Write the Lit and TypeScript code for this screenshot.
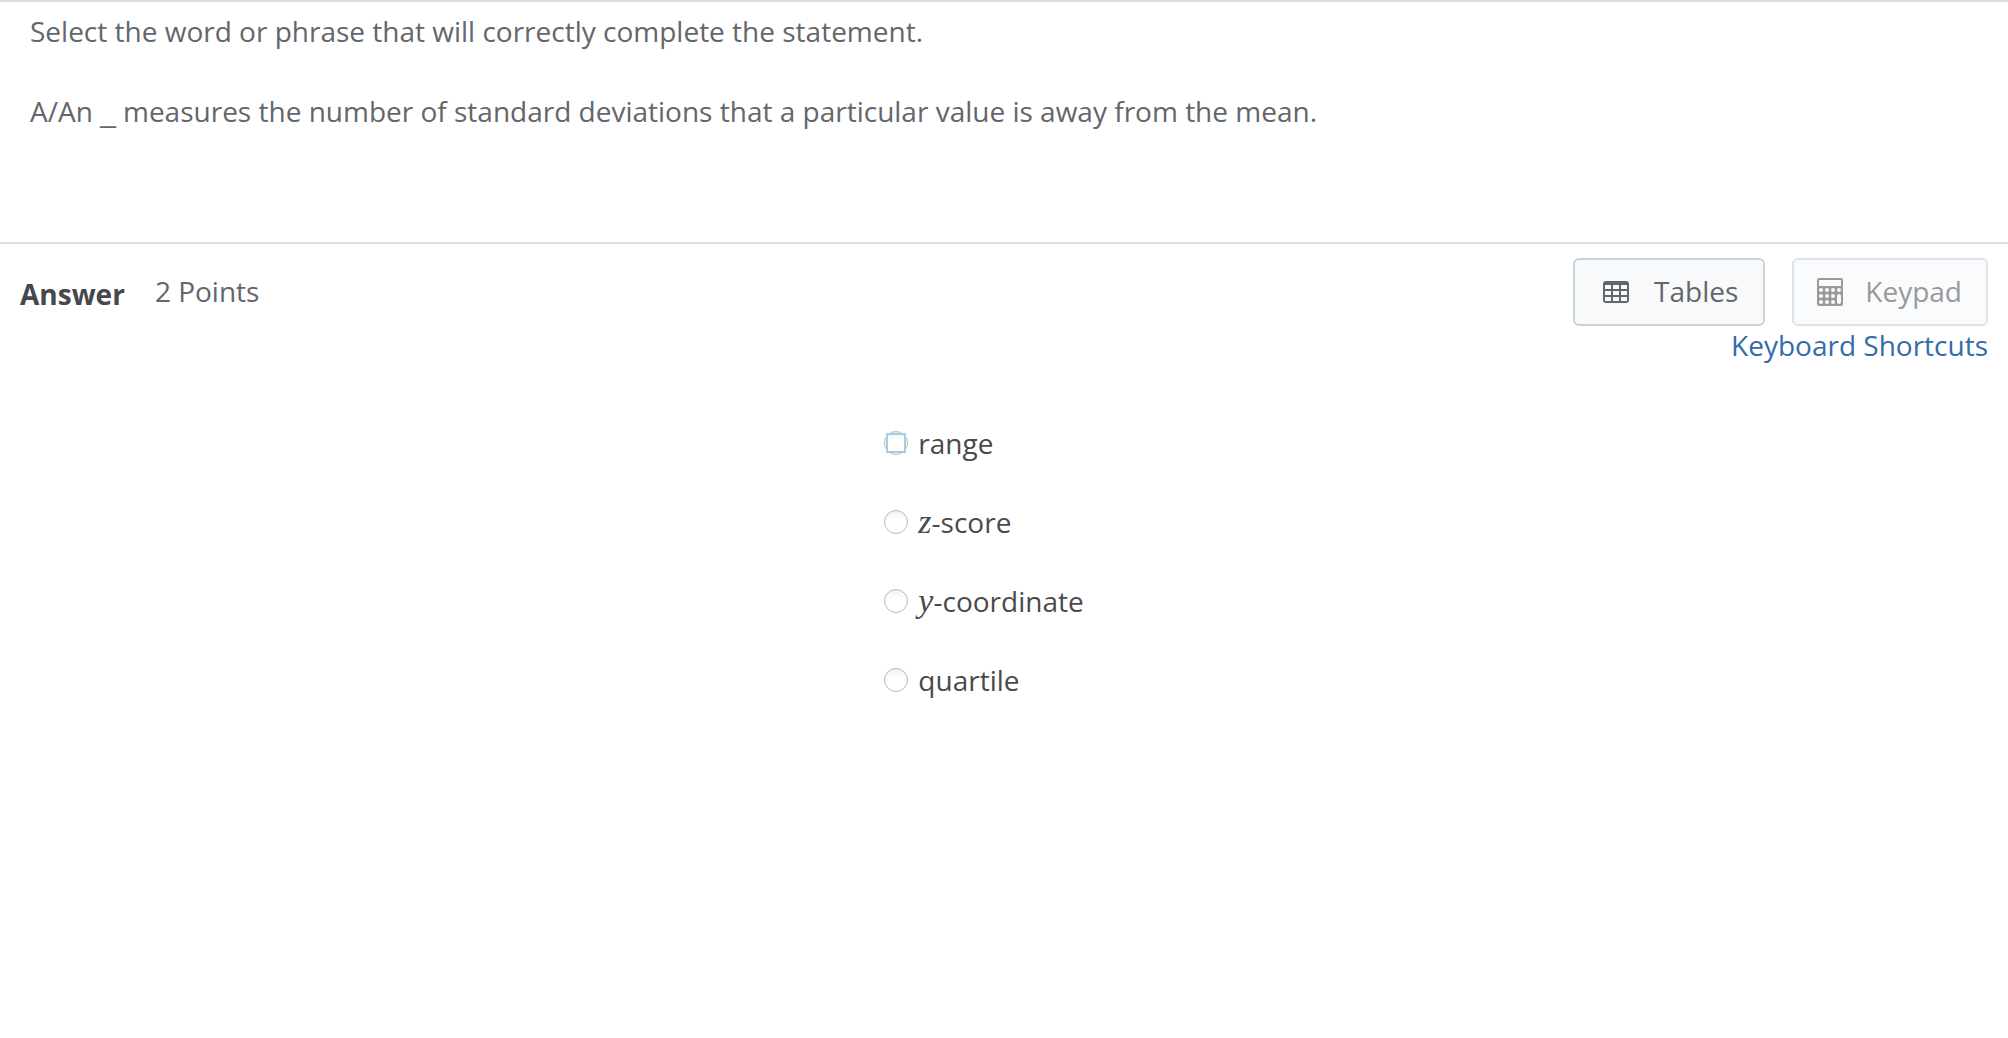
import { LitElement, html, css, svg } from "lit";
import { customElement, state } from "lit/decorators.js";

interface Option {
  id: string;
  symbol: string;
  text: string;
}

const OPTIONS: Option[] = [
  { id: "range", symbol: "", text: "range" },
  { id: "z-score", symbol: "z", text: "-score" },
  { id: "y-coordinate", symbol: "y", text: "-coordinate" },
  { id: "quartile", symbol: "", text: "quartile" },
];

const tableCells = [0, 1, 2].flatMap((row) =>
  [0, 1, 2].map(
    (col) => svg`<rect x=${2 + col * 8} y=${4 + row * 6} width="6" height="4" fill="#f8f9fb"></rect>`
  )
);

const tableIcon = html`<svg class="icon" width="28" height="28" viewBox="-1 -3 28 28" aria-hidden="true">
  <rect x="0" y="0" width="26" height="22" rx="3" fill="#63666a"></rect>
  ${tableCells}
</svg>`;

const keys = [
  [4, 12], [10, 12], [16, 12], [22, 12],
  [4, 18], [10, 18], [16, 18],
  [4, 24], [10, 24], [16, 24],
];

const keypadIcon = html`<svg class="icon" width="28" height="28" viewBox="-1 0 28 28" aria-hidden="true">
  <rect x="0" y="0" width="26" height="28" rx="2" fill="#97999b"></rect>
  <rect x="2" y="2" width="22" height="6" fill="#fafbfd"></rect>
  ${keys.map(([x, y]) => svg`<circle cx=${x} cy=${y} r="2" fill="#fafbfd"></circle>`)}
  <rect x="20" y="16" width="4" height="10" rx="2" fill="#fafbfd"></rect>
</svg>`;

@customElement("app-root")
export class AppRoot extends LitElement {
  static styles = css`
    :host {
      display: block;
      font-family: "Open Sans", "Noto Sans", sans-serif;
      font-size: 28px;
      line-height: 40px;
      color: #63666a;
      background: #fff;
    }
    .question {
      border-top: 2px solid #dedede;
      padding: 9px 30px 111px;
    }
    .question p {
      margin: 0;
    }
    .question p + p {
      margin-top: 40px;
    }
    .blank {
      font-family: "Liberation Sans", sans-serif;
      line-height: 1;
    }
    .answer {
      border-top: 2px solid #dedede;
      padding: 14px 20px;
    }
    .bar {
      display: flex;
      align-items: center;
      gap: 30px;
    }
    .title {
      margin: 0;
      padding-top: 4px;
      font-size: 28px;
      font-weight: 700;
      color: #45484c;
    }
    .points,
    .label {
      padding-bottom: 2px;
    }
    .tools {
      display: flex;
      gap: 27px;
      margin-left: auto;
    }
    .tool {
      display: flex;
      align-items: center;
      gap: 24px;
      box-sizing: border-box;
      height: 68px;
      padding: 0 25px 0 27px;
      border: 2px solid #c8d3da;
      border-radius: 6px;
      background: #f8f9fb;
      font: inherit;
      color: #63666a;
    }
    .tool:disabled {
      gap: 21px;
      padding: 0 24px 0 22px;
      border-color: #dce2e7;
      background: #fafbfd;
      color: #97999b;
    }
    .icon {
      display: block;
      flex: none;
    }
    .shortcuts {
      display: block;
      width: fit-content;
      margin-left: auto;
      line-height: 38px;
      color: #336ca8;
      text-decoration: none;
    }
    .options {
      display: grid;
      gap: 39px;
      width: fit-content;
      margin: 59px auto 0;
      padding: 0 40px 0 0;
      border: 0;
      color: #4a4a4a;
    }
    .option {
      display: flex;
      align-items: center;
      gap: 10px;
    }
    .radio {
      appearance: none;
      box-sizing: border-box;
      display: grid;
      place-items: center;
      width: 24px;
      height: 24px;
      margin: 0;
      border: 1px solid #b9b9b9;
      border-radius: 50%;
      background: linear-gradient(#f0f0f0, #fff 40%);
      outline: none;
    }
    .radio.current::before {
      content: "";
      box-sizing: border-box;
      width: 20px;
      height: 20px;
      border: 2px solid #a3cfe6;
    }
    .radio:checked {
      background: radial-gradient(#4a4a4a 5px, #fff 6px);
    }
    .symbol {
      font-family: "Liberation Serif", serif;
      font-size: 34px;
      line-height: 1;
      font-style: italic;
    }
  `;

  @state() private current = "range";

  render() {
    return html`
      <section class="question">
        <p>Select the word or phrase that will correctly complete the statement.</p>
        <p>A/An <span class="blank">_</span> measures the number of standard deviations that a particular value is away from the mean.</p>
      </section>
      <section class="answer">
        <div class="bar">
          <h2 class="title">Answer</h2>
          <span class="points">2 Points</span>
          <div class="tools">
            <button class="tool" type="button">${tableIcon}<span class="label">Tables</span></button>
            <button class="tool" type="button" disabled>${keypadIcon}<span class="label">Keypad</span></button>
          </div>
        </div>
        <a class="shortcuts" href="#shortcuts">Keyboard Shortcuts</a>
        <fieldset class="options" aria-label="Answer">
          ${OPTIONS.map(
            (o) => html`<div class="option">
              <input
                class="radio ${this.current === o.id ? "current" : ""}"
                type="radio"
                name="answer"
                id=${o.id}
                @focus=${() => (this.current = o.id)}
              />
              <label for=${o.id}>${o.symbol ? html`<span class="symbol">${o.symbol}</span>` : ""}${o.text}</label>
            </div>`
          )}
        </fieldset>
      </section>
    `;
  }
}
